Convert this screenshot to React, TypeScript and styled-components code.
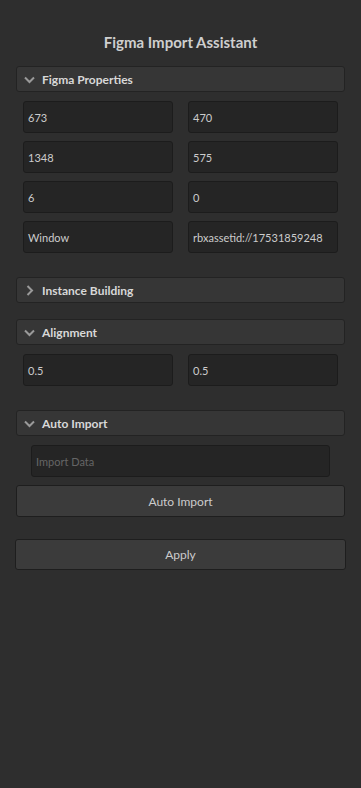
import React from "react";
import styled, { createGlobalStyle } from "styled-components";

const Global = createGlobalStyle`
  html, body { margin: 0; padding: 0; background: #2e2e2e; }
  body { font-family: "Lato", "Open Sans", sans-serif; }
  * { box-sizing: border-box; }
`;

const Page = styled.div`
  width: 361px;
  min-height: 788px;
  background: #2e2e2e;
  padding: 33px 16px 0 16px;
  display: flex;
  flex-direction: column;
`;

const Title = styled.div`
  text-align: center;
  color: #cfcfcf;
  font-weight: 700;
  font-size: 15px;
  line-height: 18px;
  margin-bottom: 15px;
`;

const Sections = styled.div`
  display: flex;
  flex-direction: column;
  gap: 16px;
`;

const Section = styled.div`
  display: flex;
  flex-direction: column;
`;

const Header = styled.div`
  height: 26px;
  background: #363636;
  border: 1px solid #232323;
  border-radius: 3px;
  display: flex;
  align-items: center;
  padding-left: 7px;
  gap: 7px;
  color: #d8d8d8;
  font-weight: 700;
  font-size: 12px;
`;

const Chevron = styled.svg`
  width: 11px;
  height: 11px;
  flex: none;
`;

const Content = styled.div`
  padding: 9px 7px 8px 7px;
`;

const Grid = styled.div`
  display: grid;
  grid-template-columns: 150px 150px;
  column-gap: 15px;
  row-gap: 8px;
`;

const Field = styled.div<{ $placeholder?: boolean }>`
  height: 32px;
  background: #252525;
  border: 1px solid #1c1c1c;
  border-radius: 3px;
  display: flex;
  align-items: center;
  padding-left: 4px;
  font-size: 11px;
  color: ${(p) => (p.$placeholder ? "#656565" : "#cccccc")};
  white-space: nowrap;
  overflow: hidden;
`;

const AutoContent = styled.div`
  padding-top: 9px;
  display: flex;
  flex-direction: column;
  gap: 8px;
`;

const Indent = styled.div`
  padding: 0 15px;
`;

const Button = styled.div<{ $wide?: boolean }>`
  height: ${(p) => (p.$wide ? "31px" : "32px")};
  margin: ${(p) => (p.$wide ? "0 -1px" : "0")};
  background: #3b3b3b;
  border: 1px solid #1e1e1e;
  border-radius: 3px;
  display: flex;
  align-items: center;
  justify-content: center;
  color: #cccccc;
  font-size: 12px;
`;

const ApplyWrap = styled.div`
  margin-top: 22px;
`;

const Down = () => (
  <Chevron viewBox="0 0 11 11">
    <polyline points="1,3.5 5.5,8 10,3.5" fill="none" stroke="#9a9a9a" strokeWidth="2" />
  </Chevron>
);
const Right = () => (
  <Chevron viewBox="0 0 11 11">
    <polyline points="3.5,1 8,5.5 3.5,10" fill="none" stroke="#9a9a9a" strokeWidth="2" />
  </Chevron>
);

export default function App() {
  return (
    <>
      <Global />
      <Page>
        <Title>Figma Import Assistant</Title>
        <Sections>
          <Section>
            <Header>
              <Down />
              Figma Properties
            </Header>
            <Content>
              <Grid>
                <Field>673</Field>
                <Field>470</Field>
                <Field>1348</Field>
                <Field>575</Field>
                <Field>6</Field>
                <Field>0</Field>
                <Field>Window</Field>
                <Field>rbxassetid://17531859248</Field>
              </Grid>
            </Content>
          </Section>
          <Section>
            <Header>
              <Right />
              Instance Building
            </Header>
          </Section>
          <Section>
            <Header>
              <Down />
              Alignment
            </Header>
            <Content>
              <Grid>
                <Field>0.5</Field>
                <Field>0.5</Field>
              </Grid>
            </Content>
          </Section>
          <Section>
            <Header>
              <Down />
              Auto Import
            </Header>
            <AutoContent>
              <Indent>
                <Field $placeholder>Import Data</Field>
              </Indent>
              <Button>Auto Import</Button>
            </AutoContent>
          </Section>
        </Sections>
        <ApplyWrap>
          <Button $wide>Apply</Button>
        </ApplyWrap>
      </Page>
    </>
  );
}
